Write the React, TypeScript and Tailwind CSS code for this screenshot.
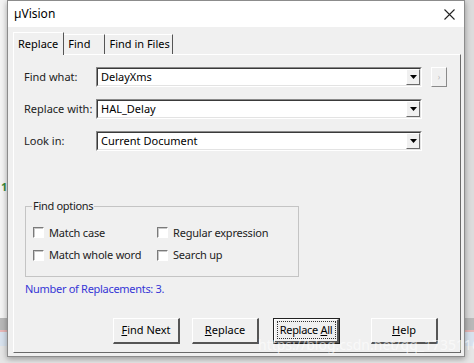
import React from "react";

const font = { fontFamily: '"Noto Sans", "Liberation Sans", sans-serif' };

function Combo({ value }: { value: string }) {
  return (
    <div className="flex h-[20px] w-[326px] items-stretch border-t border-l border-[#8a8a8a] border-r-white border-b-white border-r border-b bg-white">
      <div className="flex flex-1 items-center border-t border-l border-[#3a3a3a] border-b-[#e3e3e3] border-r-[#e3e3e3] border-b border-r pl-[3px] text-[11px] text-black">
        <span className="flex-1">{value}</span>
        <div className="flex h-full w-[14px] items-center justify-center border-t border-l border-white border-r border-b border-r-[#6a6a6a] border-b-[#6a6a6a] bg-[#f0f0f0]">
          <svg width="7" height="4" viewBox="0 0 7 4">
            <path d="M0 0 H7 L3.5 4 Z" fill="#000" />
          </svg>
        </div>
      </div>
    </div>
  );
}

function Check({ label }: { label: string }) {
  return (
    <div className="flex items-center gap-[5px]">
      <div className="h-[11px] w-[11px] border-t border-l border-[#7a7a7a] border-r border-b border-r-white border-b-white bg-white">
        <div className="h-full w-full border-t border-l border-[#c8c8c8]" />
      </div>
      <span className="whitespace-nowrap text-[11px] tracking-[-0.2px] text-[#222]">{label}</span>
    </div>
  );
}

function Btn({ children, def }: { children: React.ReactNode; def?: boolean }) {
  return (
    <div
      className={
        "flex h-[26px] w-[67px] items-center justify-center whitespace-nowrap bg-[#f0f0f0] text-[11px] text-black " +
        (def
          ? "border border-[#222]"
          : "border-t border-l border-white border-r-[#555] border-b-[#555] border-r-2 border-b-2")
      }
    >
      {def ? (
        <div className="flex h-full w-full items-center justify-center border-t border-l border-white border-r-2 border-b-2 border-r-[#555] border-b-[#555]">
          <div className="flex h-[18px] w-[59px] items-center justify-center whitespace-nowrap border border-dotted border-[#333]">
            {children}
          </div>
        </div>
      ) : (
        children
      )}
    </div>
  );
}

export default function App() {
  return (
    <div className="relative h-[363px] w-[474px] overflow-hidden bg-[#dcdcdc]" style={font}>
      {/* background editor bits */}
      <div className="absolute left-0 top-0 h-full w-[7px] bg-[#f4f4f4]" />
      <div className="absolute left-[1px] top-[181px] text-[11px] font-bold leading-none text-[#3b8a3b]">1</div>
      <div className="absolute left-0 top-[318px] h-[12px] w-full bg-[#b8b8b8]" />
      <div className="absolute left-0 top-[330px] h-[2px] w-full bg-[#e8b8b8]" />
      <div className="absolute left-0 top-[332px] h-[14px] w-full bg-[#d8e2ee]" />
      <div className="absolute left-0 top-[346px] h-[17px] w-full bg-[#e6e6e6]" />

      <div className="relative flex pl-[7px]">
        <div className="flex h-[357px] w-[458px] flex-col border border-[#8c8c8c] bg-[#f0f0f0] shadow-[0_2px_6px_rgba(0,0,0,0.35)]">
          {/* title bar */}
          <div className="flex h-[26px] items-center justify-between bg-white pl-[6px] pr-[9px]">
            <span className="text-[12px] text-black">µVision</span>
            <svg width="11" height="11" viewBox="0 0 11 11">
              <path d="M0.5 0.5 L10.5 10.5 M10.5 0.5 L0.5 10.5" stroke="#222" strokeWidth="1.1" />
            </svg>
          </div>

          {/* body */}
          <div className="flex flex-1 flex-col pl-[5px] pr-[3px] pt-[5px] pb-[3px]">
            {/* tabs */}
            <div className="relative z-10 flex h-[22px] items-end text-[11px] text-black">
              <div className="-mb-[1px] flex h-[23px] items-center border-t border-l border-white border-r border-r-[#555] bg-[#f0f0f0] px-[4px] pr-[5px]">
                Replace
              </div>
              <div className="flex h-[20px] items-center border-t border-white border-r border-r-[#555] pl-[4px] pr-[14px]">
                Find
              </div>
              <div className="flex h-[20px] items-center border-t border-white border-r border-r-[#555] pl-[4px] pr-[2px]">
                Find in Files
              </div>
            </div>

            {/* panel */}
            <div className="flex flex-1 flex-col border-t border-l border-white border-r border-b border-r-[#6a6a6a] border-b-[#6a6a6a] pl-[10px] pt-[12px]">
              <div className="flex flex-col gap-[12px]">
                <div className="flex items-center">
                  <span className="w-[72px] text-[11px] text-[#222]">Find what:</span>
                  <Combo value="DelayXms" />
                  <div className="ml-[9px] flex h-[20px] w-[16px] items-center justify-center border-t border-l border-white border-r border-b border-r-[#8a8a8a] border-b-[#8a8a8a] bg-[#f0f0f0] text-[8px] text-[#bbb]">
                    ›
                  </div>
                </div>
                <div className="flex items-center">
                  <span className="w-[72px] text-[11px] text-[#222]">Replace with:</span>
                  <Combo value="HAL_Delay" />
                </div>
                <div className="flex items-center">
                  <span className="w-[72px] text-[11px] text-[#222]">Look in:</span>
                  <Combo value="Current Document" />
                </div>
              </div>

              <fieldset className="ml-[1px] mt-[47px] h-[79px] w-[274px] border border-[#c4c4c4] px-[7px] pb-0 pt-[10px]">
                <legend className="ml-[-1px] px-[1px] text-[11px] tracking-[-0.3px] text-[#222]">Find options</legend>
                <div className="grid grid-cols-[124px_1fr] gap-y-[6px]">
                  <Check label="Match case" />
                  <Check label="Regular expression" />
                  <Check label="Match whole word" />
                  <Check label="Search up" />
                </div>
              </fieldset>

              <div className="mt-[4px] pl-[1px] text-[11px] tracking-[-0.3px] text-[#3636d6]">Number of Replacements: 3.</div>

              <div className="mt-[20px] flex pl-[89px]">
                <Btn>
                  <span>
                    <span className="underline">F</span>ind Next
                  </span>
                </Btn>
                <div className="w-[12px]" />
                <Btn>
                  <span>
                    <span className="underline">R</span>eplace
                  </span>
                </Btn>
                <div className="w-[14px]" />
                <Btn def>
                  <span className="tracking-[-0.3px]">
                    Replace <span className="underline">A</span>ll
                  </span>
                </Btn>
                <div className="w-[31px]" />
                <Btn>
                  <span>
                    <span className="underline">H</span>elp
                  </span>
                </Btn>
              </div>
            </div>
          </div>
        </div>
      </div>

      <div className="pointer-events-none absolute left-[258px] top-[338px] whitespace-nowrap text-[14px] leading-none text-white/60">
        https://blog.csdn.net/qq_17351161
      </div>
    </div>
  );
}
